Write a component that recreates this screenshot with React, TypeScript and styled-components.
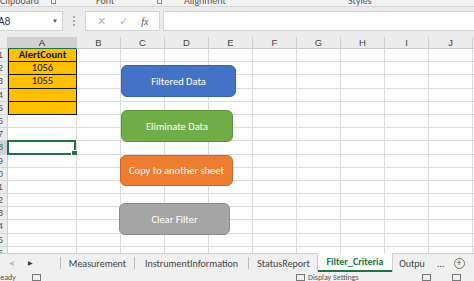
import React from "react";
import styled, { createGlobalStyle } from "styled-components";

const Global = createGlobalStyle`
  html, body { margin: 0; padding: 0; background: #fff; }
  body { font-family: Carlito, "Open Sans", "Liberation Sans", sans-serif; }
  * { box-sizing: border-box; }
`;

const Page = styled.div`
  width: 474px;
  height: 281px;
  overflow: hidden;
  display: flex;
  flex-direction: column;
  background: #f3f3f3;
  color: #444;
`;

const RibbonLabels = styled.div`
  height: 7px;
  display: flex;
  align-items: flex-end;
  overflow: hidden;
  background: #f3f3f3;
  font-size: 10px;
  line-height: 10px;
  color: #555;
  border-bottom: 1px solid #d6d6d6;
`;

const GroupLabel = styled.span<{ $w: number }>`
  width: ${(p) => p.$w}px;
  flex: none;
  display: flex;
  justify-content: space-between;
  padding-right: 6px;
  white-space: nowrap;
`;

const Launcher = styled.span`
  width: 5px;
  height: 5px;
  border: 1px solid #888;
  align-self: center;
`;

const GapStrip = styled.div<{ $h: number }>`
  height: ${(p) => p.$h}px;
  background: #ececec;
  flex: none;
`;

const FormulaBar = styled.div`
  height: 20px;
  flex: none;
  display: flex;
  align-items: stretch;
  background: #ececec;
`;

const NameBox = styled.div`
  width: 63px;
  background: #fff;
  border: 1px solid #d4d4d4;
  border-left: none;
  display: flex;
  align-items: center;
  justify-content: space-between;
  padding: 0 4px 0 0;
  font-size: 10px;
  color: #333;
  font-family: "Liberation Sans", sans-serif;
`;

const NameText = styled.span`
  margin-left: -2px;
`;

const Caret = styled.span`
  font-size: 6px;
  color: #555;
`;

const Dots = styled.div`
  width: 22px;
  display: flex;
  flex-direction: column;
  align-items: center;
  justify-content: center;
  gap: 2px;
  & > i { width: 2px; height: 2px; background: #aaa; display: block; }
`;

const FxBox = styled.div`
  width: 75px;
  background: #fff;
  border: 1px solid #d4d4d4;
  display: flex;
  align-items: center;
  justify-content: space-around;
  padding: 0 4px;
  color: #b3b3b3;
  font-size: 11px;
`;

const FxText = styled.span`
  font-family: "Liberation Serif", serif;
  font-style: italic;
  color: #555;
  font-size: 10px;
`;

const Input = styled.div`
  flex: 1;
  margin-left: 3px;
  background: #fff;
  border: 1px solid #d4d4d4;
  border-right: none;
`;

const GridArea = styled.div`
  position: relative;
  height: 216px;
  flex: none;
  overflow: hidden;
  background: #fff;
`;

const Grid = styled.div`
  display: grid;
  grid-template-columns: 8px 69px repeat(9, 44px) 20px;
  grid-template-rows: 12px repeat(16, 13.2px);
`;

const ColHead = styled.div<{ $sel?: boolean }>`
  background: ${(p) => (p.$sel ? "#d2d2d2" : "#ececec")};
  border-right: 1px solid #cfcfcf;
  border-bottom: 1px solid ${(p) => (p.$sel ? "#217346" : "#cfcfcf")};
  font-size: 9.5px;
  line-height: 11px;
  text-align: center;
  color: ${(p) => (p.$sel ? "#222" : "#444")};
  font-family: "Liberation Sans", sans-serif;
`;

const Corner = styled.div`
  background: #ececec;
  border-right: 1px solid #cfcfcf;
  border-bottom: 1px solid #cfcfcf;
`;

const RowHead = styled.div<{ $sel?: boolean }>`
  background: ${(p) => (p.$sel ? "#d2d2d2" : "#ececec")};
  border-right: 1px solid ${(p) => (p.$sel ? "#217346" : "#cfcfcf")};
  border-bottom: 1px solid #d6d6d6;
  font-size: 9px;
  line-height: 12px;
  text-align: right;
  padding-right: 4px;
  overflow: hidden;
  white-space: nowrap;
  direction: rtl;
  color: ${(p) => (p.$sel ? "#217346" : "#555")};
  font-family: "Liberation Sans", sans-serif;
`;

const Cell = styled.div<{ $fill?: boolean; $bold?: boolean }>`
  background: ${(p) => (p.$fill ? "#ffc000" : "#fff")};
  border-right: 1px solid ${(p) => (p.$fill ? "#1a1a1a" : "#dadada")};
  border-bottom: 1px solid ${(p) => (p.$fill ? "#1a1a1a" : "#dadada")};
  border-left: ${(p) => (p.$fill ? "1px solid #1a1a1a" : "none")};
  font-size: 10.5px;
  line-height: 12px;
  text-align: center;
  font-weight: ${(p) => (p.$bold ? 700 : 400)};
  color: #111;
  position: relative;
`;

const Selected = styled.div`
  position: absolute;
  inset: -1px 0 -1px -1px;
  border: 2px solid #217346;
  &::after {
    content: "";
    position: absolute;
    right: -4px;
    bottom: -4px;
    width: 5px;
    height: 5px;
    background: #217346;
    border: 1px solid #fff;
  }
`;

const Shape = styled.div<{ $bg: string; $bd: string }>`
  position: absolute;
  background: ${(p) => p.$bg};
  border: 1px solid ${(p) => p.$bd};
  border-radius: 6px;
  color: #fff;
  font-size: 10.5px;
  display: flex;
  align-items: center;
  justify-content: center;
`;

const TabBar = styled.div`
  height: 19px;
  flex: none;
  display: flex;
  align-items: stretch;
  background: #f0f0f0;
  border-top: 1px solid #d0d0d0;
  font-size: 10px;
  color: #444;
`;

const NavArrows = styled.div`
  width: 60px;
  display: flex;
  align-items: center;
  gap: 14px;
  padding-left: 9px;
  font-size: 6px;
`;

const Arrow = styled.span<{ $dim?: boolean }>`
  color: ${(p) => (p.$dim ? "#bbb" : "#333")};
`;

const Tab = styled.div<{ $active?: boolean; $w: number }>`
  width: ${(p) => p.$w}px;
  flex: none;
  display: flex;
  align-items: center;
  justify-content: center;
  white-space: nowrap;
  overflow: hidden;
  background: ${(p) => (p.$active ? "#fff" : "transparent")};
  color: ${(p) => (p.$active ? "#217346" : "#444")};
  font-weight: ${(p) => (p.$active ? 700 : 400)};
  margin-top: ${(p) => (p.$active ? "-1px" : "0")};
  border-bottom: ${(p) => (p.$active ? "2px solid #217346" : "none")};
  box-shadow: ${(p) => (p.$active ? "1px 0 0 #cfcfcf, -1px 0 0 #cfcfcf" : "none")};
`;

const Sep = styled.div`
  width: 1px;
  margin: 3px 0;
  background: #bdbdbd;
  flex: none;
`;

const More = styled.div`
  display: flex;
  align-items: center;
  gap: 9px;
  padding-left: 5px;
  color: #444;
`;

const Plus = styled.span`
  width: 11px;
  height: 11px;
  border: 1px solid #777;
  border-radius: 50%;
  display: flex;
  align-items: center;
  justify-content: center;
  font-size: 10px;
  line-height: 1;
  color: #555;
`;

const StatusBar = styled.div`
  flex: 1;
  background: #f0f0f0;
  font-size: 8px;
  line-height: 9px;
  color: #555;
  overflow: hidden;
  position: relative;
`;

const StatusIcon = styled.span<{ $x: number }>`
  position: absolute;
  left: ${(p) => p.$x}px;
  top: 2px;
  width: 9px;
  height: 7px;
  border: 1px solid #777;
`;

const StatusText = styled.span<{ $x: number }>`
  position: absolute;
  left: ${(p) => p.$x}px;
  top: 1px;
  white-space: nowrap;
`;

const cols = ["A", "B", "C", "D", "E", "F", "G", "H", "I", "J", ""];
const aValues: Record<number, string> = { 1: "AlertCount", 2: "1056", 3: "1055", 4: "", 5: "" };

const shapes = [
  { t: "Filtered Data", l: 121, y: 28, w: 115, h: 32, bg: "#4472c4", bd: "#3a62a8" },
  { t: "Eliminate Data", l: 121, y: 73, w: 112, h: 32, bg: "#70ad47", bd: "#5e9239" },
  { t: "Copy to another sheet", l: 120, y: 118, w: 113, h: 31, bg: "#ed7d31", bd: "#c96a29" },
  { t: "Clear Filter", l: 119, y: 166, w: 111, h: 32, bg: "#a5a5a5", bd: "#8c8c8c" },
];

export default function App() {
  const rows = Array.from({ length: 16 }, (_, i) => i + 1);
  return (
    <Page>
      <Global />
      <RibbonLabels>
        <GroupLabel $w={62}>Clipboard<Launcher /></GroupLabel>
        <GroupLabel $w={106}>
          <span style={{ marginLeft: 34 }}>Font</span>
          <Launcher />
        </GroupLabel>
        <GroupLabel $w={180}>
          <span style={{ marginLeft: 16 }}>Alignment</span>
        </GroupLabel>
        <GroupLabel $w={120}>
          <span>Styles</span>
        </GroupLabel>
      </RibbonLabels>
      <GapStrip $h={4} />
      <FormulaBar>
        <NameBox>
          <NameText>A8</NameText>
          <Caret>▼</Caret>
        </NameBox>
        <Dots>
          <i />
          <i />
          <i />
        </Dots>
        <FxBox>
          <span>✕</span>
          <span>✓</span>
          <FxText>fx</FxText>
        </FxBox>
        <Input />
      </FormulaBar>
      <GapStrip $h={6} />
      <GridArea>
        <Grid>
          <Corner />
          {cols.map((c, i) => (
            <ColHead key={i} $sel={c === "A"}>
              {c}
            </ColHead>
          ))}
          {rows.map((r) => (
            <React.Fragment key={r}>
              <RowHead $sel={r === 8}>{r}</RowHead>
              {cols.map((c, i) => {
                const isA = c === "A";
                const fill = isA && r <= 5;
                return (
                  <Cell key={i} $fill={fill} $bold={isA && r === 1}>
                    {isA ? aValues[r] ?? "" : ""}
                    {isA && r === 8 && <Selected />}
                  </Cell>
                );
              })}
            </React.Fragment>
          ))}
        </Grid>
        {shapes.map((s) => (
          <Shape
            key={s.t}
            $bg={s.bg}
            $bd={s.bd}
            style={{ left: s.l, top: s.y, width: s.w, height: s.h }}
          >
            {s.t}
          </Shape>
        ))}
      </GridArea>
      <TabBar>
        <NavArrows>
          <Arrow $dim>◀</Arrow>
          <Arrow>▶</Arrow>
        </NavArrows>
        <Sep />
        <Tab $w={73}>Measurement</Tab>
        <Sep />
        <Tab $w={113}>InstrumentInformation</Tab>
        <Sep />
        <Tab $w={69}>StatusReport</Tab>
        <Tab $active $w={74}>Filter_Criteria</Tab>
        <Tab $w={40}>Outpu</Tab>
        <More>
          <span>...</span>
          <Plus>+</Plus>
        </More>
      </TabBar>
      <StatusBar>
        <StatusText $x={-4}>Ready</StatusText>
        <StatusIcon $x={32} />
        <StatusIcon $x={296} />
        <StatusText $x={308}>Display Settings</StatusText>
        <StatusIcon $x={422} />
        <StatusIcon $x={452} />
      </StatusBar>
    </Page>
  );
}
